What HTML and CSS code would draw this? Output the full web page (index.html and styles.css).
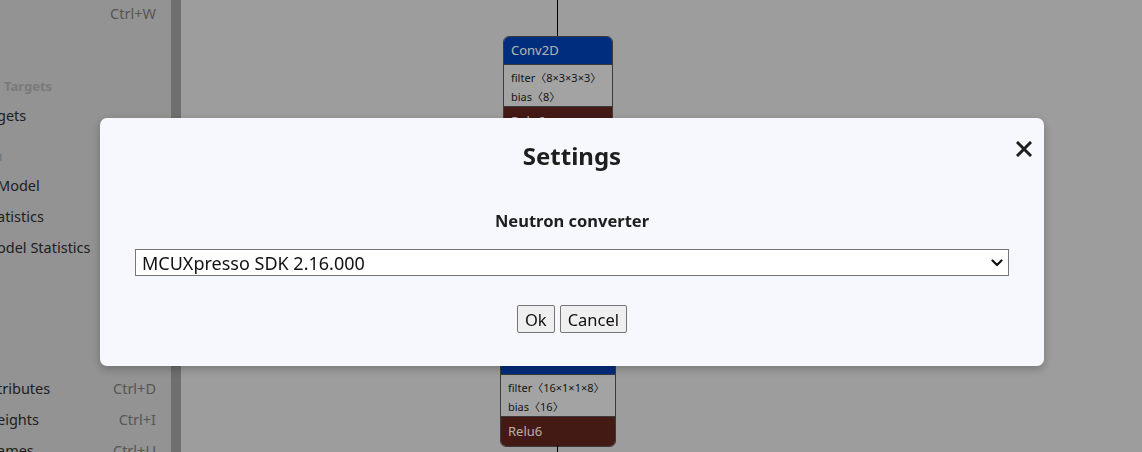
FILE: index.html
```html
<!DOCTYPE html>
<html lang="en">
<head>
<meta charset="utf-8">
<title>Settings</title>
<link rel="stylesheet" href="styles.css">
</head>
<body>
<div class="app">
  <aside class="sidebar">
    <div class="menu">
      <div class="mi first"><span class="lbl"></span><span class="key">Ctrl+W</span></div>
      <div class="sep s1"></div>
      <div class="mh"><span class="hl">Targets</span></div>
      <div class="mi"><span class="lbl">gets</span></div>
      <div class="sep s2"></div>
      <div class="mh"><span class="hl cutu">u</span></div>
      <div class="mi"><span class="lbl">Model</span></div>
      <div class="mi"><span class="lbl">atistics</span></div>
      <div class="mi"><span class="lbl">odel Statistics</span></div>
      <div class="sep s3"></div>
      <div class="mi"><span class="lbl">tributes</span><span class="key">Ctrl+D</span></div>
      <div class="mi"><span class="lbl">eights</span><span class="key">Ctrl+I</span></div>
      <div class="mi"><span class="lbl">ames</span><span class="key">Ctrl+U</span></div>
    </div>
    <div class="scroll"></div>
  </aside>
  <main class="graph">
    <div class="edge e1"></div>
    <div class="node n1">
      <div class="nh">Conv2D</div>
      <div class="na">
        <div>filter〈8×3×3×3〉</div>
        <div>bias〈8〉</div>
      </div>
      <div class="nr">Relu6</div>
    </div>
    <div class="node n2">
      <div class="nh">Conv2D</div>
      <div class="na">
        <div>filter〈16×1×1×8〉</div>
        <div>bias〈16〉</div>
      </div>
      <div class="nr">Relu6</div>
    </div>
    <div class="edge e2"></div>
  </main>
</div>
<div class="overlay">
  <div class="modal">
    <button class="close" aria-label="Close">
      <svg width="16" height="16" viewBox="0 0 16 16"><path d="M2 2 L14 14 M14 2 L2 14" stroke="#1e1e1e" stroke-width="3" stroke-linecap="square"/></svg>
    </button>
    <h2 class="title">Settings</h2>
    <h3 class="subtitle">Neutron converter</h3>
    <div class="selwrap">
      <select class="sel">
        <option>MCUXpresso SDK 2.16.000</option>
      </select>
      <svg class="chev" width="12" height="8" viewBox="0 0 12 8"><path d="M1.5 1.5 L6 6 L10.5 1.5" fill="none" stroke="#111" stroke-width="2.2" stroke-linecap="round" stroke-linejoin="round"/></svg>
    </div>
    <div class="actions">
      <button class="btn">Ok</button>
      <button class="btn">Cancel</button>
    </div>
  </div>
</div>
</body>
</html>
```
FILE: styles.css
```css
* { box-sizing: border-box; }
html, body { margin: 0; padding: 0; }
body {
  width: 1142px;
  height: 452px;
  overflow: hidden;
  font-family: "Noto Sans", "Open Sans", sans-serif;
}
.app {
  display: flex;
  height: 452px;
}
.sidebar {
  display: flex;
  width: 181px;
  flex: none;
  background: #c4c4c4;
  overflow: hidden;
}
.menu {
  width: 171px;
  display: flex;
  flex-direction: column;
  font-size: 14.5px;
  color: #2b2b2b;
}
.mi {
  height: 31px;
  line-height: 31px;
  display: flex;
  justify-content: space-between;
  padding-right: 15px;
  white-space: nowrap;
  flex: none;
}
.mi.first { margin-top: -2px; }
.lbl { margin-left: -3px; }
.key { color: #737373; }
.mh {
  height: 28px;
  line-height: 28px;
  font-weight: bold;
  font-size: 13px;
  color: #a3a3a3;
  white-space: nowrap;
  flex: none;
}
.hl { margin-left: 4px; }
.hl.cutu { margin-left: -6px; }
.sep { flex: none; }
.s1 { height: 43px; }
.s2 { height: 11px; }
.s3 { height: 110px; }
.scroll {
  width: 10px;
  background: #949494;
}
.graph {
  position: relative;
  flex: 1;
  background: #d2d2d2;
}
.edge {
  position: absolute;
  left: 376px;
  width: 1px;
  background: #000;
}
.e1 { top: 0; height: 36px; }
.e2 { top: 445px; height: 10px; }
.node {
  position: absolute;
  border: 1px solid #4e4e4e;
  border-radius: 6px;
  overflow: hidden;
  background: #dadada;
  font-family: "Noto Sans", "Noto Sans CJK SC", sans-serif;
}
.n1 { left: 322px; top: 36px; width: 110px; }
.n2 { left: 319px; top: 346px; width: 116px; }
.nh {
  height: 28px;
  line-height: 27px;
  padding-left: 7px;
  background: #003ca8;
  color: #f0f0f0;
  font-size: 13px;
  border-bottom: 1px solid #4e4e4e;
}
.na {
  height: 42px;
  padding: 3px 0 0 7px;
  font-size: 11px;
  line-height: 19px;
  color: #1c1c1c;
  border-bottom: 1px solid #4e4e4e;
  white-space: nowrap;
}
.nr {
  height: 29px;
  line-height: 28px;
  padding-left: 7px;
  background: #5b231d;
  color: #f0e8e0;
  font-size: 13px;
}
.overlay {
  position: fixed;
  inset: 0;
  background: rgba(0, 0, 0, 0.25);
  display: flex;
  align-items: flex-start;
  justify-content: flex-start;
  padding: 118px 0 0 100px;
}
.modal {
  position: relative;
  width: 944px;
  height: 248px;
  background: #f7f8fd;
  border-radius: 7px;
  box-shadow: 0 3px 10px rgba(0, 0, 0, 0.25);
  padding: 22px 35px 0;
  display: flex;
  flex-direction: column;
  align-items: center;
}
.close {
  position: absolute;
  right: 11px;
  top: 22px;
  width: 18px;
  height: 18px;
  padding: 1px;
  border: 0;
  background: none;
}
.close svg { display: block; }
.title {
  margin: 0;
  font-size: 24px;
  line-height: 32px;
  font-weight: bold;
  color: #1e1e1e;
}
.subtitle {
  margin: 37px 0 0;
  font-size: 16.5px;
  line-height: 24px;
  font-weight: bold;
  color: #1e1e1e;
}
.selwrap {
  position: relative;
  align-self: stretch;
  margin-top: 16px;
}
.sel {
  display: block;
  width: 100%;
  height: 27px;
  appearance: none;
  -webkit-appearance: none;
  background: #fff;
  border: 1px solid #767676;
  border-radius: 0;
  padding: 0 6px;
  font-family: "Noto Sans", sans-serif;
  font-size: 18px;
  color: #111;
}
.chev {
  position: absolute;
  right: 6px;
  top: 10px;
  pointer-events: none;
}
.actions {
  display: flex;
  gap: 5px;
  margin-top: 29px;
}
.btn {
  height: 28px;
  padding: 0 7px;
  background: #efefef;
  border: 1px solid #767676;
  border-radius: 2px;
  font-family: "Noto Sans", sans-serif;
  font-size: 16.5px;
  color: #111;
}
```
